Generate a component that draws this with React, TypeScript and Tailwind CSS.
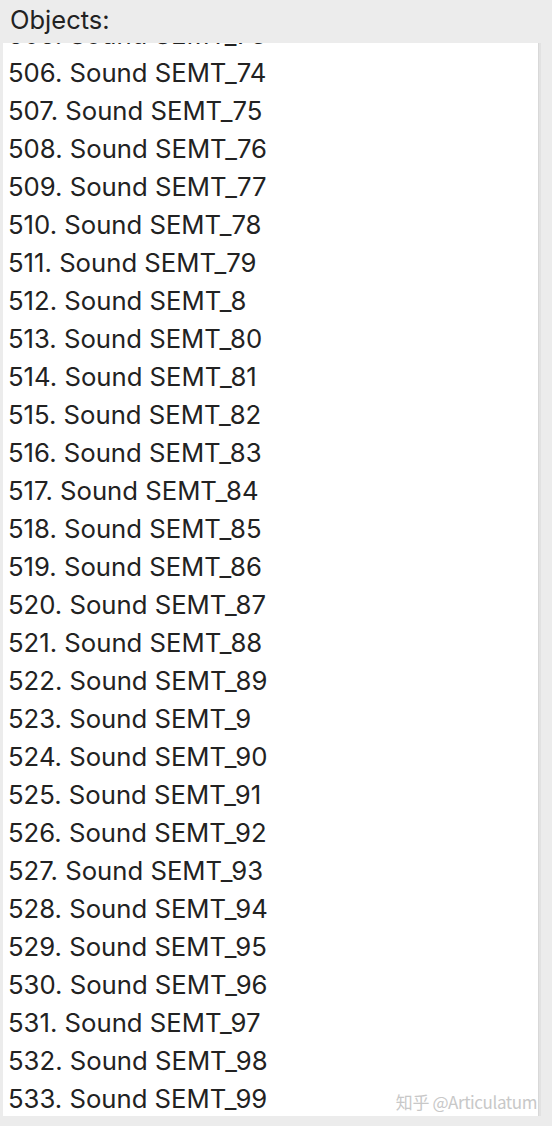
import React from "react";

// items shown in the scrolled list, sorted the way the app sorts names
const ITEMS = [
    [505, "73"],
    [506, "74"],
    [507, "75"],
    [508, "76"],
    [509, "77"],
    [510, "78"],
    [511, "79"],
    [512, "8"],
    [513, "80"],
    [514, "81"],
    [515, "82"],
    [516, "83"],
    [517, "84"],
    [518, "85"],
    [519, "86"],
    [520, "87"],
    [521, "88"],
    [522, "89"],
    [523, "9"],
    [524, "90"],
    [525, "91"],
    [526, "92"],
    [527, "93"],
    [528, "94"],
    [529, "95"],
    [530, "96"],
    [531, "97"],
    [532, "98"],
    [533, "99"],
] as const;

export default function App() {
    return (
        <div
            className="w-[552px] h-[1126px] bg-[#ececec] flex flex-col overflow-hidden text-[#222222]"
            style={{ fontFamily: "Inter, 'Liberation Sans', sans-serif" }}
        >
            {/* Header */}
            <div className="h-[43px] flex items-center pl-[10px] pb-[3px] text-[25.5px] shrink-0">
                Objects:
            </div>

            {/* List box */}
            <div className="relative ml-[3px] w-[538px] h-[1073px] flex shrink-0">
                <div className="flex-1 bg-white overflow-hidden">
                    <ul className="mt-[-27px]">
                        {ITEMS.map(([n, s]) => (
                            <li
                                key={n}
                                className="h-[38px] flex items-center pl-[5px] text-[25.7px] whitespace-nowrap"
                            >
                                {n}. Sound SEMT_{s}
                            </li>
                        ))}
                    </ul>
                </div>
                <div className="w-[3px] bg-[#e2e2e2] border-l border-[#d8d8d8]" />

                {/* watermark */}
                <div
                    className="absolute right-[4px] bottom-[2px] text-[17px] text-[#c8c8c8] tracking-tight"
                    style={{ fontFamily: "'Noto Sans CJK SC', 'Liberation Sans', sans-serif" }}
                >
                    知乎 @Articulatum
                </div>
            </div>
        </div>
    );
}
